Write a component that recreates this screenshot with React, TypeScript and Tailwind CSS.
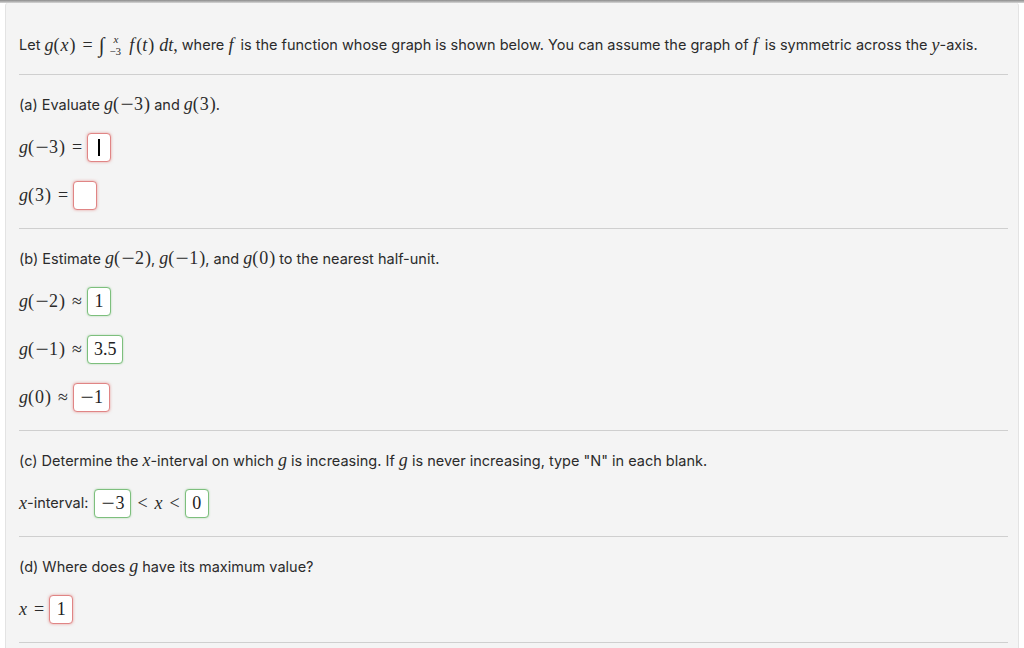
import React from "react";

const M = ({ children, className = "" }: { children: React.ReactNode; className?: string }) => (
  <span className={`font-['Liberation_Serif',serif] text-[18px] ${className}`}>{children}</span>
);
const I = ({ children }: { children: React.ReactNode }) => (
  <span className="italic">{children}</span>
);
const Mi = () => (
  <span className="inline-block w-[14px] scale-x-[1.3] text-center">−</span>
);
const L = () => <span className="mr-[1px]">(</span>;
const R = () => <span className="ml-[1px]">)</span>;

const Box = ({ v, ok, cursor }: { v?: React.ReactNode; ok?: boolean; cursor?: boolean }) => (
  <span
    className={`inline-flex h-[29px] min-w-[24px] items-center justify-center rounded-[4px] border bg-white px-[6px] font-['Liberation_Serif',serif] text-[18px] text-[#222] ${
      ok
        ? "border-[#7dbf7d] shadow-[0_0_2px_rgba(92,184,92,0.5)]"
        : "border-[#e08585] shadow-[0_0_3px_rgba(217,83,79,0.55)]"
    }`}
  >
    {cursor ? <span className="block h-[17px] w-[1.5px] bg-black" /> : v}
  </span>
);

const Row = ({ label, rel, children }: { label: React.ReactNode; rel: string; children: React.ReactNode }) => (
  <div className="flex h-[30px] items-center">
    <M>
      {label}
      <span className="ml-[7px] mr-[5px]">{rel}</span>
    </M>
    {children}
  </div>
);

const Heading = ({ children }: { children: React.ReactNode }) => (
  <div className="h-[20px] whitespace-nowrap leading-[20px]">{children}</div>
);

const Section = ({ children }: { children: React.ReactNode }) => (
  <div className="flex flex-col gap-[18px] border-b border-[#cfcfcf] pb-[18px] pt-[19px]">{children}</div>
);

export default function App() {
  return (
    <div className="min-h-[648px] bg-white font-['Inter',sans-serif] text-[14.5px] text-[#2b2b2b]">
      <div className="h-[3px] bg-gradient-to-b from-[#8c8c8c] to-[#d6d6d6]" />
      <div className="ml-[5px] w-[1014px] rounded-t-[3px] border border-t-0 border-[#e3e3e3] bg-[#f4f4f4] pl-[13px] pr-[10px]">
        <div className="border-b border-[#cfcfcf] pb-[19px] pt-[32px]">
          <div className="flex h-[20px] items-center whitespace-nowrap">
            <span>Let&nbsp;</span>
            <M>
              <I>g</I>
              <L />
              <I>x</I>
              <R />
              <span className="ml-[7px] mr-[6px]">=</span>
            </M>
            <span className="inline-flex items-center font-['Liberation_Serif',serif]">
              <span className="pr-[2px] text-[21px] italic leading-none">∫</span>
              <span className="ml-[3px] inline-flex flex-col text-[11px] leading-[12px]">
                <span className="ml-[4px] italic">x</span>
                <span>−3</span>
              </span>
            </span>
            <M className="ml-[8px]">
              <I>f</I>
              <span className="ml-[2px]">(</span>
              <I>t</I>
              <R />
              <span className="ml-[5px]">
                <I>dt</I>
              </span>
              ,
            </M>
            <span>&nbsp;where&nbsp;</span>
            <M className="mr-[3px]">
              <I>f</I>
            </M>
            <span>&nbsp;is the function whose graph is shown below. You can assume the graph of&nbsp;</span>
            <M className="mr-[3px]">
              <I>f</I>
            </M>
            <span>&nbsp;is symmetric across the&nbsp;</span>
            <M>
              <I>y</I>
            </M>
            <span>-axis.</span>
          </div>
        </div>

        <Section>
          <Heading>
            (a) Evaluate{" "}
            <M>
              <I>g</I>
              <L />
              <Mi />3<R />
            </M>{" "}
            and{" "}
            <M>
              <I>g</I>
              <L />3<R />
            </M>
            .
          </Heading>
          <Row label={<><I>g</I><L /><Mi />3<R /></>} rel="=">
            <Box cursor />
          </Row>
          <Row label={<><I>g</I><L />3<R /></>} rel="=">
            <Box />
          </Row>
        </Section>

        <Section>
          <Heading>
            (b) Estimate{" "}
            <M>
              <I>g</I>
              <L />
              <Mi />2<R />
            </M>
            ,{" "}
            <M>
              <I>g</I>
              <L />
              <Mi />1<R />
            </M>
            , and{" "}
            <M>
              <I>g</I>
              <L />0<R />
            </M>{" "}
            to the nearest half-unit.
          </Heading>
          <Row label={<><I>g</I><L /><Mi />2<R /></>} rel="≈">
            <Box v="1" ok />
          </Row>
          <Row label={<><I>g</I><L /><Mi />1<R /></>} rel="≈">
            <Box v="3.5" ok />
          </Row>
          <Row label={<><I>g</I><L />0<R /></>} rel="≈">
            <Box v={<><Mi />1</>} />
          </Row>
        </Section>

        <Section>
          <Heading>
            (c) Determine the <M><I>x</I></M>-interval on which <M><I>g</I></M> is increasing. If <M><I>g</I></M> is never
            increasing, type "N" in each blank.
          </Heading>
          <div className="flex h-[30px] items-center">
            <M>
              <I>x</I>
            </M>
            <span className="mr-[6px]">-interval:</span>
            <Box v={<><Mi />3</>} ok />
            <M className="ml-[6px] mr-[5px]">
              &lt;<span className="mx-[7px] italic">x</span>&lt;
            </M>
            <Box v="0" ok />
          </div>
        </Section>

        <Section>
          <Heading>
            (d) Where does <M><I>g</I></M> have its maximum value?
          </Heading>
          <Row label={<I>x</I>} rel="=">
            <Box v="1" />
          </Row>
        </Section>
        <div className="h-[8px]" />
      </div>
    </div>
  );
}
